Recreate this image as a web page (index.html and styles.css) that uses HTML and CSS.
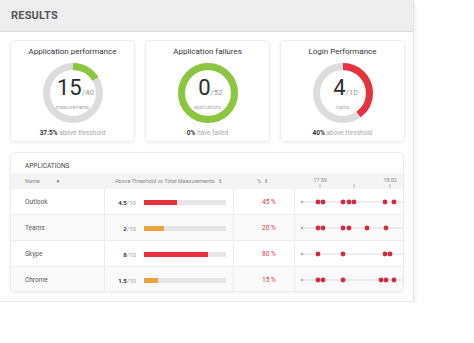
FILE: index.html
```html
<!DOCTYPE html>
<html>
<head>
<meta charset="utf-8">
<link rel="stylesheet" href="styles.css">
</head>
<body>
<div class="panel">
  <div class="header">RESULTS</div>
  <div class="cards">
    <div class="card">
      <div class="card-title">Application performance</div>
      <div class="donut">
        <svg class="ring" viewBox="0 0 60 60" width="60" height="60">
          <circle class="track" cx="30" cy="30" r="26.5"/>
          <circle class="arc green" cx="30" cy="30" r="26.5" pathLength="100" stroke-dasharray="16 100" transform="rotate(-90 30 30)"/>
        </svg>
        <div class="donut-text">
          <div class="num">15<span class="den">/40</span></div>
          <div class="unit">measurements</div>
        </div>
      </div>
      <div class="card-foot"><b>37.5%</b> above threshold</div>
    </div>
    <div class="card">
      <div class="card-title">Application failures</div>
      <div class="donut">
        <svg class="ring" viewBox="0 0 60 60" width="60" height="60">
          <circle class="track" cx="30" cy="30" r="26.5"/>
          <circle class="arc green" cx="30" cy="30" r="26.5" pathLength="100" stroke-dasharray="100 100" transform="rotate(-90 30 30)"/>
        </svg>
        <div class="donut-text">
          <div class="num">0<span class="den">/52</span></div>
          <div class="unit">applications</div>
        </div>
      </div>
      <div class="card-foot"><b>0%</b> have failed</div>
    </div>
    <div class="card">
      <div class="card-title">Login Performance</div>
      <div class="donut">
        <svg class="ring" viewBox="0 0 60 60" width="60" height="60">
          <circle class="track" cx="30" cy="30" r="26.5"/>
          <circle class="arc red" cx="30" cy="30" r="26.5" pathLength="100" stroke-dasharray="40 100" transform="rotate(-90 30 30)"/>
        </svg>
        <div class="donut-text">
          <div class="num">4<span class="den">/10</span></div>
          <div class="unit">logins</div>
        </div>
      </div>
      <div class="card-foot"><b>40%</b> above threshold</div>
    </div>
  </div>

  <div class="table-card">
    <div class="table-title">APPLICATIONS</div>
    <div class="row head">
      <div class="c1">Name <span class="caret">&#9660;</span></div>
      <div class="c2 hc2">Above Threshold vs Total Measurements <span class="sort">&#8661;</span></div>
      <div class="c3 hc3">% <span class="sort">&#8661;</span></div>
      <div class="c4">
        <svg width="109" height="16" class="tl">
          <text x="25" y="9" class="tick-label">17:59</text>
          <text x="95" y="9" class="tick-label">18:02</text>
          <line x1="25" y1="11" x2="25" y2="15" class="tick"/>
          <line x1="59" y1="11" x2="59" y2="15" class="tick"/>
          <line x1="95" y1="11" x2="95" y2="15" class="tick"/>
        </svg>
      </div>
    </div>

    <div class="row">
      <div class="c1">Outlook</div>
      <div class="c2"><span class="val"><b>4.5</b>/10</span><span class="bar"><span class="fill red" style="width:40%"></span></span></div>
      <div class="c3 pct">45 %</div>
      <div class="c4">
        <svg width="109" height="26" class="tl">
          <line x1="7" y1="13" x2="109" y2="13" class="axis"/>
          <circle cx="7" cy="13" r="1.2" class="start"/>
          <circle cx="23" cy="13" r="2.4" class="dot"/><circle cx="28" cy="13" r="2.4" class="dot"/>
          <circle cx="48" cy="13" r="2.4" class="dot"/><circle cx="54" cy="13" r="2.4" class="dot"/><circle cx="59" cy="13" r="2.4" class="dot"/>
          <circle cx="90" cy="13" r="2.4" class="dot"/><circle cx="99" cy="13" r="2.4" class="dot"/>
        </svg>
      </div>
    </div>

    <div class="row alt">
      <div class="c1">Teams</div>
      <div class="c2"><span class="val"><b>2</b>/10</span><span class="bar"><span class="fill orange" style="width:24%"></span></span></div>
      <div class="c3 pct">20 %</div>
      <div class="c4">
        <svg width="109" height="26" class="tl">
          <line x1="7" y1="13" x2="109" y2="13" class="axis"/>
          <circle cx="7" cy="13" r="1.2" class="start"/>
          <circle cx="23" cy="13" r="2.4" class="dot"/><circle cx="28" cy="13" r="2.4" class="dot"/>
          <circle cx="48" cy="13" r="2.4" class="dot"/><circle cx="54" cy="13" r="2.4" class="dot"/>
          <circle cx="72" cy="13" r="2.4" class="dot"/><circle cx="91" cy="13" r="2.4" class="dot"/>
        </svg>
      </div>
    </div>

    <div class="row">
      <div class="c1">Skype</div>
      <div class="c2"><span class="val"><b>8</b>/10</span><span class="bar"><span class="fill red" style="width:78%"></span></span></div>
      <div class="c3 pct">80 %</div>
      <div class="c4">
        <svg width="109" height="26" class="tl">
          <line x1="7" y1="13" x2="109" y2="13" class="axis"/>
          <circle cx="7" cy="13" r="1.2" class="start"/>
          <circle cx="23" cy="13" r="2.4" class="dot"/>
          <circle cx="48" cy="13" r="2.4" class="dot"/>
          <circle cx="90" cy="13" r="2.4" class="dot"/><circle cx="95" cy="13" r="2.4" class="dot"/>
        </svg>
      </div>
    </div>

    <div class="row alt last">
      <div class="c1">Chrome</div>
      <div class="c2"><span class="val"><b>1.5</b>/10</span><span class="bar"><span class="fill orange" style="width:17%"></span></span></div>
      <div class="c3 pct">15 %</div>
      <div class="c4">
        <svg width="109" height="26" class="tl">
          <line x1="7" y1="13" x2="109" y2="13" class="axis"/>
          <circle cx="7" cy="13" r="1.2" class="start"/>
          <circle cx="23" cy="13" r="2.4" class="dot"/><circle cx="28" cy="13" r="2.4" class="dot"/>
          <circle cx="48" cy="13" r="2.4" class="dot"/>
          <circle cx="86" cy="13" r="2.4" class="dot"/><circle cx="91" cy="13" r="2.4" class="dot"/>
          <circle cx="99" cy="13" r="2.4" class="dot"/>
        </svg>
      </div>
    </div>
  </div>
</div>
</body>
</html>
```

FILE: styles.css
```css
* { box-sizing: border-box; }
html, body { margin: 0; padding: 0; background: #fff; }
body { font-family: Roboto, "Liberation Sans", sans-serif; color: #333; }

.panel {
  width: 414px;
  height: 302px;
  background: #fff;
  border-right: 1px solid #e4e4e4;
  border-bottom: 1px solid #e8e8e8;
  box-shadow: 1px 2px 4px rgba(0,0,0,0.08);
}

.header {
  height: 32px;
  background: #eeeeee;
  border-bottom: 1px solid #dcdcdc;
  display: flex;
  align-items: center;
  padding-left: 11px;
  font-size: 11px;
  font-weight: 700;
  color: #555;
  letter-spacing: 0.2px;
}

.cards {
  display: flex;
  gap: 10px;
  padding: 8px 0 0 10px;
}

.card {
  width: 125px;
  height: 102px;
  border: 1px solid #ededed;
  border-radius: 5px;
  box-shadow: 0 1px 3px rgba(0,0,0,0.07);
  display: flex;
  flex-direction: column;
  align-items: center;
  padding-top: 6px;
}

.card-title {
  font-size: 8px;
  line-height: 10px;
  color: #333;
  font-weight: 400;
}

.donut {
  margin-top: 6px;
  width: 60px;
  height: 60px;
  display: grid;
}
.donut > * { grid-area: 1 / 1; }
.ring { display: block; }
.track { fill: none; stroke: #dcdcdc; stroke-width: 7; }
.arc { fill: none; stroke-width: 7; }
.arc.green { stroke: #8cc63f; }
.arc.red { stroke: #e5323e; }

.donut-text {
  display: flex;
  flex-direction: column;
  align-items: center;
  justify-content: center;
  padding-top: 2px;
}
.num {
  font-size: 22px;
  line-height: 20px;
  color: #2d2d2d;
  padding-left: 6px;
  font-weight: 400;
}
.den {
  font-size: 8px;
  color: #999;
}
.unit {
  font-size: 5px;
  line-height: 7px;
  color: #aaa;
  margin-top: 1px;
}

.card-foot {
  margin-top: 5px;
  font-size: 6.5px;
  line-height: 10px;
  color: #aaa;
}
.card-foot b { color: #333; font-weight: 700; }

.table-card {
  margin: 10px 0 0 10px;
  width: 394px;
  height: 140px;
  border: 1px solid #ececec;
  border-radius: 5px;
  box-shadow: 0 1px 3px rgba(0,0,0,0.07);
  overflow: hidden;
}

.table-title {
  height: 20px;
  padding: 9px 0 0 14px;
  font-size: 6.5px;
  line-height: 9px;
  color: #444;
}

.row {
  display: grid;
  grid-template-columns: 94px 129px 61px 109px;
  height: 26px;
  border-bottom: 1px solid #ececec;
  font-size: 6.5px;
  color: #555;
}
.row.alt { background: #fafafa; }
.row.last { border-bottom: none; }
.row.head {
  height: 16px;
  background: #f4f4f4;
  border-bottom: none;
  color: #888;
  font-size: 5.5px;
}
.row > div {
  display: flex;
  align-items: center;
}
.row > .c1 { padding-left: 14px; }
.row > .c1, .row > .c2, .row > .c3 { border-right: 1px solid #ececec; }
.row.head > div { border-right-color: transparent; }

.caret { font-size: 4.5px; margin-left: 16px; color: #666; }
.sort { font-size: 5px; margin-left: 3px; color: #666; }
.hc2 { padding-left: 10px; }
.hc3 { padding-left: 23px; }

.val {
  width: 31px;
  text-align: right;
  color: #999;
  font-size: 6px;
}
.val b { color: #333; font-weight: 700; }
.bar {
  margin-left: 8px;
  width: 82px;
  height: 5px;
  background: #e6e6e6;
  display: flex;
}
.fill { height: 5px; }
.fill.red { background: #e5323e; }
.fill.orange { background: #f0a23a; }

.pct {
  color: #e5323e;
  padding-left: 28px;
  font-size: 6.5px;
}

.tl { display: block; }
.axis { stroke: #dedede; stroke-width: 1; }
.start { fill: #aaa; }
.dot { fill: #d8283c; }
.tick { stroke: #aaa; stroke-width: 0.8; }
.tick-label {
  font-family: Roboto, "Liberation Sans", sans-serif;
  font-size: 5.5px;
  fill: #888;
  text-anchor: middle;
}
```
